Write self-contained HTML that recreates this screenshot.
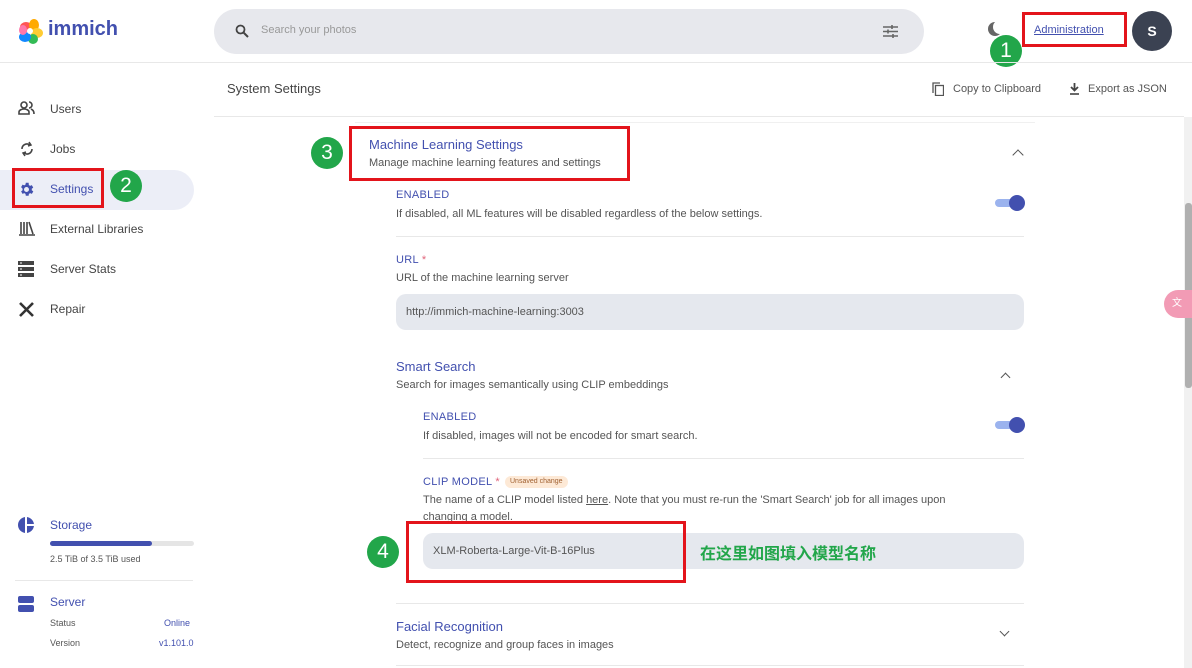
<!DOCTYPE html>
<html><head><meta charset="utf-8"><style>
*{box-sizing:border-box;margin:0;padding:0}
body{width:1192px;height:668px;overflow:hidden;background:#fff;font-family:"Liberation Sans","Noto Sans CJK SC",sans-serif;position:relative;color:#555}
.a{position:absolute;white-space:nowrap}
.nav{font-size:12px;color:#444}
.lbl{font-size:11px;color:#4250af;letter-spacing:.3px}
.desc{font-size:11px;color:#555}
.ttl{font-size:13px;color:#4250af}
.hr{position:absolute;height:1px;background:#e8e8e8}
.badge{position:absolute;width:32px;height:32px;border-radius:50%;background:#22a64a;color:#fff;font-size:21px;text-align:center;line-height:32px}
.red{position:absolute;border:3px solid #e3141b}
.tog{position:absolute;width:30px;height:16px}
.tog::before{content:"";position:absolute;left:0;top:4px;width:26px;height:8px;border-radius:4px;background:#9bb3ee}
.tog::after{content:"";position:absolute;right:0;top:0;width:16px;height:16px;border-radius:50%;background:#4250af}
.inp{position:absolute;background:#e5e8ee;border-radius:10px;font-size:11px;color:#555;padding-left:10px}
</style></head><body>
<!-- header -->
<svg class="a" style="left:17px;top:18px" width="26" height="26" viewBox="0 0 26 26">
<ellipse cx="9" cy="9" rx="6" ry="5" fill="#f55"/><ellipse cx="17" cy="7" rx="5" ry="6" fill="#fa0"/><ellipse cx="20" cy="15" rx="6" ry="5" fill="#fc3"/><ellipse cx="16" cy="21" rx="5" ry="5" fill="#3b5"/><ellipse cx="8" cy="19" rx="6" ry="5" fill="#18f"/><ellipse cx="6" cy="12" rx="4" ry="5" fill="#f7a"/><circle cx="13" cy="13" r="3" fill="#fff"/></svg>
<div class="a" style="left:48px;top:18px;font-size:20px;font-weight:bold;color:#4250af">immich</div>
<div class="a" style="left:214px;top:9px;width:710px;height:45px;border-radius:23px;background:#e7e8ed"></div>
<svg class="a" style="left:235px;top:24px" width="14" height="14" viewBox="0 0 14 14"><circle cx="5.5" cy="5.5" r="4" stroke="#444" stroke-width="1.8" fill="none"/><path d="M8.5 8.5L13 13" stroke="#444" stroke-width="2"/></svg>
<div class="a" style="left:261px;top:24px;font-size:11px;color:#999">Search your photos</div>
<svg class="a" style="left:883px;top:25px" width="15" height="13" viewBox="0 0 15 13"><path d="M0 2h15M0 6.5h15M0 11h15" stroke="#666" stroke-width="1.5"/><path d="M9 0v4M5 4.5v4M10 9v4" stroke="#666" stroke-width="1.6"/></svg>
<div class="a" style="left:988px;top:22px;width:14px;height:14px;border-radius:50%;background:#666"></div>
<div class="a" style="left:993px;top:20px;width:14px;height:14px;border-radius:50%;background:#fff"></div>
<div class="a" style="left:1034px;top:24px;font-size:11px;color:#4250af;text-decoration:underline">Administration</div>
<div class="red" style="left:1022px;top:12px;width:105px;height:35px"></div>
<div class="a" style="left:1132px;top:11px;width:40px;height:40px;border-radius:50%;background:#3b4252;color:#fff;font-size:14px;font-weight:bold;text-align:center;line-height:40px">S</div>
<div class="badge" style="left:990px;top:35px">1</div>
<div class="hr" style="left:0;top:62px;width:1192px"></div>
<!-- sidebar -->
<div class="a" style="left:0;top:170px;width:194px;height:40px;border-radius:0 20px 20px 0;background:#eceef7"></div>
<svg class="a" style="left:18px;top:101px" width="17" height="14" viewBox="0 0 17 14"><circle cx="6" cy="4" r="3" fill="none" stroke="#444" stroke-width="1.6"/><path d="M1 13v-2c0-2 3-3 5-3s5 1 5 3v2z" fill="none" stroke="#444" stroke-width="1.6"/><path d="M11 1a3 3 0 010 6M13 8c2 1 3 2 3 5" fill="none" stroke="#444" stroke-width="1.6"/></svg>
<div class="a nav" style="left:50px;top:102px">Users</div>
<svg class="a" style="left:20px;top:141px" width="14" height="16" viewBox="0 0 14 16"><path d="M2 8a5 5 0 018-4M12 8a5 5 0 01-8 4" fill="none" stroke="#444" stroke-width="1.6"/><path d="M9 1l2 3-3 1M5 15l-2-3 3-1" fill="none" stroke="#444" stroke-width="1.5"/></svg>
<div class="a nav" style="left:50px;top:142px">Jobs</div>
<svg class="a" style="left:18px;top:181px" width="17" height="17" viewBox="0 0 24 24"><path fill="#4250af" d="M12 15.5A3.5 3.5 0 1112 8.5a3.5 3.5 0 010 7zm7.4-2.5a7.5 7.5 0 000-2l2.1-1.6-2-3.5-2.5 1a7 7 0 00-1.700-1L15 2.5h-4l-.4 2.7a7 7 0 00-1.7 1l-2.5-1-2 3.5L6.5 11a7.5 7.5 0 000 2l-2.1 1.6 2 3.5 2.5-1a7 7 0 001.7 1l.4 2.7h4l.4-2.7a7 7 0 001.7-1l2.5 1 2-3.5z"/></svg>
<div class="a nav" style="left:50px;top:182px;color:#4250af">Settings</div>
<div class="red" style="left:12px;top:168px;width:92px;height:40px"></div>
<div class="badge" style="left:110px;top:170px">2</div>
<svg class="a" style="left:19px;top:221px" width="16" height="15" viewBox="0 0 16 15"><path d="M2 1v12M5 1v12M8 1v12M10 1l4 12M0 14h16" stroke="#444" stroke-width="1.6"/></svg>
<div class="a nav" style="left:50px;top:222px">External Libraries</div>
<svg class="a" style="left:18px;top:261px" width="16" height="16" viewBox="0 0 16 16"><rect x="0" y="0" width="16" height="4" fill="#444"/><rect x="0" y="6" width="16" height="4" fill="#444"/><rect x="0" y="12" width="16" height="4" fill="#444"/><path d="M2 2h2M2 8h2M2 14h2" stroke="#fff"/></svg>
<div class="a nav" style="left:50px;top:262px">Server Stats</div>
<svg class="a" style="left:18px;top:301px" width="17" height="17" viewBox="0 0 17 17"><path d="M2 15L15 2M2 2l13 13" stroke="#333" stroke-width="2.6"/></svg>
<div class="a nav" style="left:50px;top:302px">Repair</div>
<div class="a" style="left:18px;top:517px;width:16px;height:16px;border-radius:50%;background:#4250af"></div>
<div class="a" style="left:25px;top:517px;width:2px;height:16px;background:#fff"></div>
<div class="a" style="left:25px;top:524px;width:9px;height:2px;background:#fff"></div>
<div class="a" style="left:50px;top:518px;font-size:12px;color:#4250af">Storage</div>
<div class="a" style="left:50px;top:541px;width:144px;height:5px;border-radius:3px;background:#e5e5e5"></div>
<div class="a" style="left:50px;top:541px;width:102px;height:5px;border-radius:3px;background:#4250af"></div>
<div class="a" style="left:50px;top:554px;font-size:9px;color:#555">2.5 TiB of 3.5 TiB used</div>
<div class="hr" style="left:15px;top:580px;width:178px"></div>
<div class="a" style="left:18px;top:596px;width:16px;height:7px;border-radius:2px;background:#4250af"></div>
<div class="a" style="left:18px;top:605px;width:16px;height:7px;border-radius:2px;background:#4250af"></div>
<div class="a" style="left:50px;top:595px;font-size:12px;color:#4250af">Server</div>
<div class="a" style="left:50px;top:618px;font-size:9px">Status</div>
<div class="a" style="left:164px;top:618px;font-size:9px;color:#4250af">Online</div>
<div class="a" style="left:50px;top:638px;font-size:9px">Version</div>
<div class="a" style="left:159px;top:638px;font-size:9px;color:#4250af">v1.101.0</div>
<!-- subheader -->
<div class="a" style="left:227px;top:81px;font-size:13px;color:#444">System Settings</div>
<svg class="a" style="left:932px;top:82px" width="12" height="14" viewBox="0 0 12 14"><rect x="3.5" y="3.5" width="8" height="10" fill="none" stroke="#555" stroke-width="1.3"/><path d="M1 11V1h7" fill="none" stroke="#555" stroke-width="1.3"/></svg>
<div class="a" style="left:953px;top:83px;font-size:11px;color:#555">Copy to Clipboard</div>
<svg class="a" style="left:1069px;top:83px" width="11" height="12" viewBox="0 0 11 12"><path d="M5.5 0v7M2 4l3.5 3.5L9 4" fill="none" stroke="#444" stroke-width="1.8"/><path d="M1 11h9" stroke="#444" stroke-width="1.6"/></svg>
<div class="a" style="left:1088px;top:83px;font-size:11px;color:#555">Export as JSON</div>
<div class="hr" style="left:214px;top:116px;width:970px"></div>
<!-- content -->
<div class="hr" style="left:355px;top:122px;width:680px;background:#f0f0f0"></div>
<div class="a ttl" style="left:369px;top:137px">Machine Learning Settings</div>
<div class="a desc" style="left:369px;top:157px">Manage machine learning features and settings</div>
<div class="red" style="left:349px;top:126px;width:281px;height:55px"></div>
<div class="badge" style="left:311px;top:137px">3</div>
<div class="a" style="left:1014px;top:151px;width:8px;height:8px;border-left:1.5px solid #555;border-top:1.5px solid #555;transform:rotate(45deg)"></div>
<div class="a lbl" style="left:396px;top:189px">ENABLED</div>
<div class="a desc" style="left:396px;top:208px">If disabled, all ML features will be disabled regardless of the below settings.</div>
<div class="tog" style="left:995px;top:195px"></div>
<div class="hr" style="left:396px;top:236px;width:628px"></div>
<div class="a lbl" style="left:396px;top:254px">URL <span style="color:#e0647a">*</span></div>
<div class="a desc" style="left:396px;top:272px">URL of the machine learning server</div>
<div class="inp" style="left:396px;top:294px;width:628px;height:36px;line-height:36px">http://immich-machine-learning:3003</div>
<div class="a ttl" style="left:396px;top:359px">Smart Search</div>
<div class="a desc" style="left:396px;top:379px">Search for images semantically using CLIP embeddings</div>
<div class="a" style="left:1002px;top:374px;width:7px;height:7px;border-left:1.5px solid #555;border-top:1.5px solid #555;transform:rotate(45deg)"></div>
<div class="a lbl" style="left:423px;top:411px">ENABLED</div>
<div class="a desc" style="left:423px;top:430px">If disabled, images will not be encoded for smart search.</div>
<div class="tog" style="left:995px;top:417px"></div>
<div class="hr" style="left:423px;top:458px;width:601px"></div>
<div class="a lbl" style="left:423px;top:476px">CLIP MODEL <span style="color:#e0647a">*</span></div>
<div class="a" style="left:505px;top:476px;padding:0 5px;height:12px;line-height:12px;border-radius:6px;background:#fde9d6;font-size:7px;color:#a06030">Unsaved change</div>
<div class="a desc" style="left:423px;top:494px">The name of a CLIP model listed <u>here</u>. Note that you must re-run the 'Smart Search' job for all images upon</div>
<div class="a desc" style="left:423px;top:511px">changing a model.</div>
<div class="inp" style="left:423px;top:533px;width:601px;height:36px;line-height:36px">XLM-Roberta-Large-Vit-B-16Plus</div>
<div class="a" style="left:700px;top:540px;font-size:16px;font-weight:bold;color:#22a64a">在这里如图填入模型名称</div>
<div class="red" style="left:406px;top:521px;width:280px;height:62px"></div>
<div class="badge" style="left:367px;top:536px">4</div>
<div class="hr" style="left:396px;top:603px;width:628px"></div>
<div class="a ttl" style="left:396px;top:619px">Facial Recognition</div>
<div class="a desc" style="left:396px;top:639px">Detect, recognize and group faces in images</div>
<div class="a" style="left:1001px;top:628px;width:7px;height:7px;border-right:1.5px solid #555;border-bottom:1.5px solid #555;transform:rotate(45deg)"></div>
<div class="hr" style="left:396px;top:665px;width:628px"></div>
<!-- scrollbar -->
<div class="a" style="left:1184px;top:117px;width:8px;height:551px;background:#f1f1f1"></div>
<div class="a" style="left:1185px;top:203px;width:7px;height:185px;background:#b0b0b0;border-radius:3px"></div>
<div class="a" style="left:1164px;top:290px;width:30px;height:28px;border-radius:14px 0 0 14px;background:#f29bb5;color:#fff;font-size:10px;line-height:28px;padding-left:8px">文</div>
</body></html>
